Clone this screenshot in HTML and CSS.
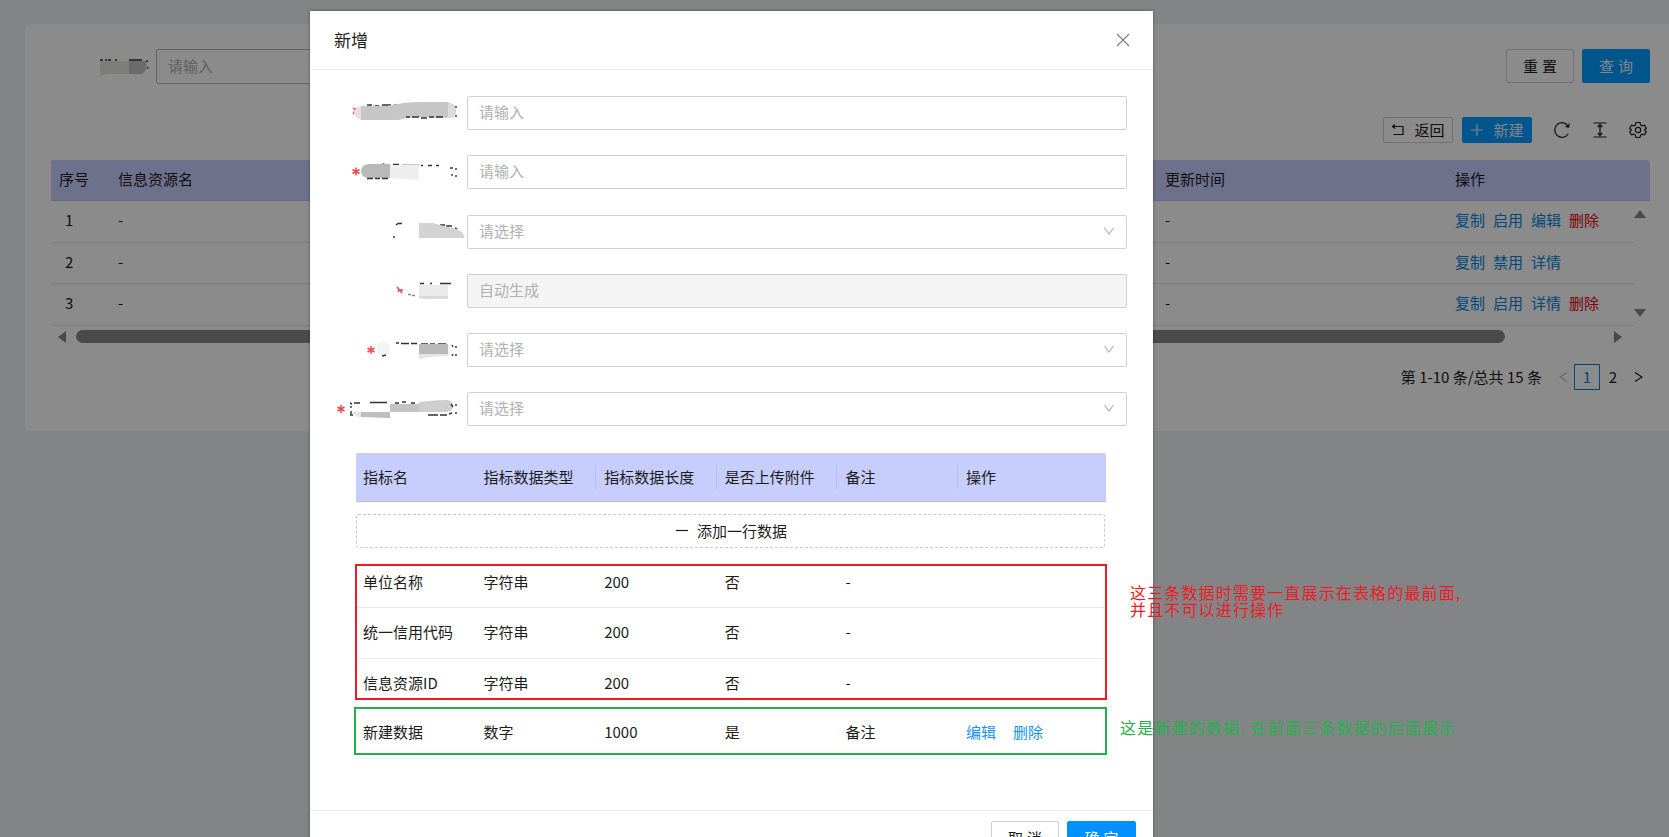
FILE: index.html
```html
<!DOCTYPE html>
<html lang="zh-CN">

<head>
    <meta charset="UTF-8">
    <title>信息资源</title>
    <link rel="stylesheet" href="styles.css">
</head>

<body>
    <div class="page">
        <div class="card">
            <!-- 查询条件 -->
            <div class="search">
                <svg class="searchLabel" width="50" height="34" viewBox="0 0 50 34">
                    <path class="bit" d="M1 11h3m2 0h2m1 0h3m4 0h2m12 0h13" />
                    <path fill="#e4e4e0" d="M1 12h29v13H10q-5 0-9 2z" />
                    <path fill="#c4c4c4" d="M30 12h17q2 9-4 13H30z" />
                    <path class="bit" d="M47 12h2m-1 7h1.500" />
                </svg>
                <div class="input searchInput">请输入</div>
                <div class="searchBtns">
                    <span class="btn">重置</span>
                    <span class="btn primary">查询</span>
                </div>
            </div>
            <!-- 工具栏 -->
            <div class="toolbar">
                <span class="btn small">
                    <svg width="14" height="14" viewBox="0 0 14 14"><path class="line" d="M1.500 3.500h10.500v8h-9.500M4 1.500l-2.500 2 2.500 2" /></svg>返回</span>
                <span class="btn small primary">
                    <svg width="14" height="14" viewBox="0 0 14 14"><path class="line" d="M7 1v12M1 7h12" /></svg>新建</span>
                <svg class="tool" width="18" height="18" viewBox="0 0 18 18"><path class="line" d="M15.300 12.800a7.300 7.300 0 1 1 .2-7.200M16.200 2.500l-.5 3.500-3.300-.6" /></svg>
                <svg class="tool" width="18" height="18" viewBox="0 0 18 18"><path class="line" d="M2.500 2h13M2.500 16h13M9 4v10M6.800 6L9 3.500 11.200 6M6.800 12L9 14.500l2.200-2.500" /></svg>
                <svg class="tool" width="18" height="18" viewBox="0 0 18 18"><path class="line" d="M7 1.500h4l.6 2.400 1.500.9 2.400-.7 1.800 3.200-1.800 1.700 1.800 1.700-1.800 3.200-2.400-.7-1.500.9-.6 2.400H7l-.6-2.400-1.500-.9-2.400.7L.7 10.700 2.500 9 .7 7.300l1.800-3.200 2.400.7 1.500-.9z" /><circle class="line" cx="9" cy="9" r="2.700" /></svg>
            </div>
            <!-- 列表 -->
            <div class="list">
                <div class="listRow listHead">
                    <span>序号</span><span>信息资源名</span><span>更新时间</span><span>操作</span>
                </div>
                <div class="listBody">
                    <div class="listRows">
                        <div class="listRow">
                            <span class="no">1</span><span>-</span><span>-</span>
                            <span class="links"><a>复制</a><a>启用</a><a>编辑</a><a class="del">删除</a></span>
                        </div>
                        <div class="listRow">
                            <span class="no">2</span><span>-</span><span>-</span>
                            <span class="links"><a>复制</a><a>禁用</a><a>详情</a></span>
                        </div>
                        <div class="listRow">
                            <span class="no">3</span><span>-</span><span>-</span>
                            <span class="links"><a>复制</a><a>启用</a><a>详情</a><a class="del">删除</a></span>
                        </div>
                    </div>
                    <div class="scrollY">
                        <svg width="12" height="8" viewBox="0 0 12 8"><path d="M6 0l6 8H0z" /></svg>
                        <svg width="12" height="8" viewBox="0 0 12 8"><path d="M6 8l6-8H0z" /></svg>
                    </div>
                </div>
                <div class="scrollX">
                    <svg width="8" height="12" viewBox="0 0 8 12"><path d="M0 6l8-6v12z" /></svg>
                    <div class="thumb"></div>
                    <svg width="8" height="12" viewBox="0 0 8 12"><path d="M8 6L0 0v12z" /></svg>
                </div>
            </div>
            <!-- 分页 -->
            <div class="pager">
                <span class="total">第 1-10 条/总共 15 条</span>
                <svg class="prev" width="9" height="12" viewBox="0 0 9 12"><path class="line" d="M8 1.500L1 6l7 4.500" /></svg>
                <span class="num active">1</span>
                <span class="num">2</span>
                <svg width="9" height="12" viewBox="0 0 9 12"><path class="line" d="M1 1.500l7 4.500-7 4.500" /></svg>
            </div>
        </div>
    </div>

    <div class="mask"></div>

    <div class="modal">
        <div class="modalHead">
            <span>新增</span>
            <svg width="14" height="14" viewBox="0 0 14 14"><path class="line" d="M1 1l12 12M13 1L1 13" /></svg>
        </div>
        <div class="form">
            <div class="item">
                <div class="label">
                    <svg width="157" height="34" viewBox="0 0 157 34">
                        <path class="star" d="M43 12l3 2-3 4m3-6v3" />
                        <path class="bit" d="M57 9h5m3 1h4m3-1h9m3 0h3m1 1h4" />
                        <path fill="#ecdede" d="M51 10q-5 1-7 6 1 6 7 8z" />
                        <path fill="#c6c6c6" d="M51 10h26q18-4 32-4h26q6 0 10 4 3 8-3 12l-33-1q-11 0-20 3H51z" />
                        <path fill="#dcdcdc" d="M138 6.200q11 4 6 14l-3 2h-3z" />
                        <path class="bit" d="M96 21h4m2 0h7m2 1h6m2-1h5m2 0h7M146 10v2m0 7v2" />
                    </svg>
                </div>
                <div class="input">请输入</div>
            </div>
            <div class="item">
                <div class="label">
                    <svg width="157" height="34" viewBox="0 0 157 34">
                        <path class="star" d="M46 12.500v8M42.500 14.500l7 4m0-4l-7 4" />
                        <path class="bit" d="M73 8.500l3 2m7-1h6m3 1h17m2 0h2m5 0h4m4 0h3" />
                        <path fill="#b9b9b9" d="M59 9h21v14H58q-7-1-7-7t8-7z" />
                        <path fill="#eee" d="M80 10h29v15l-29-2z" />
                        <path class="bit" d="M57 23.500h6m2 0h5m2 0h6M140 13h3m-1 6v2m4-8v2m0 5v2" />
                    </svg>
                </div>
                <div class="input">请输入</div>
            </div>
            <div class="item">
                <div class="label">
                    <svg width="157" height="34" viewBox="0 0 157 34">
                        <path class="bit" d="M86 10l2-1.500h4M84 21v2M130 10h5m1 1h6m3 2l2 1" />
                        <path fill="#d3d3d3" d="M109 8h14q10 3 20 5 10 2 12 10h-46z" />
                    </svg>
                </div>
                <div class="input select">请选择<svg width="12" height="8" viewBox="0 0 12 8"><path class="line" d="M1.500 1L6 7l4.500-6" /></svg></div>
            </div>
            <div class="item">
                <div class="label">
                    <svg width="157" height="34" viewBox="0 0 157 34">
                        <path class="star" d="M87 13l5 6m-4-1l1-2m0 0l4 0" />
                        <path class="bit thin" d="M98 20.500h3m1 1h3" />
                        <path class="bit" d="M110 9.500h4m6 0h2m8 0h11" />
                        <path fill="#ebebeb" d="M109 11h29v11h-29z" />
                        <path fill="#dadada" d="M109 22h29v3h-22q-5 0-7-1z" />
                    </svg>
                </div>
                <div class="input disabled">自动生成</div>
            </div>
            <div class="item">
                <div class="label">
                    <svg width="157" height="34" viewBox="0 0 157 34">
                        <path class="star" d="M61 13v8M57.500 15l7 4m0-4l-7 4" />
                        <circle cx="73" cy="15.500" r="7" fill="#f4f4f4" />
                        <path class="bit" d="M72 23l4-1M86 10h3m2 .500h8m2 0h6m4 .500h7m2 0h5m3 0h8" />
                        <path fill="#b9b9b9" d="M109 11h29v10h-29z" />
                        <path fill="#e4e4e4" d="M109 21h29v2q-16 0-29 3z" />
                        <path class="bit" d="M142 12l1 2m0 7l-1 2M146 13v2m0 6v2" />
                    </svg>
                </div>
                <div class="input select">请选择<svg width="12" height="8" viewBox="0 0 12 8"><path class="line" d="M1.500 1L6 7l4.500-6" /></svg></div>
            </div>
            <div class="item">
                <div class="label">
                    <svg width="157" height="34" viewBox="0 0 157 34">
                        <path class="star" d="M31 13v8M27.500 15l7 4m0-4l-7 4" />
                        <path class="bit" d="M40 11l2 1m2-1h6m10-.500h17m8 .500h4m3-1h4m5 1h4M41 14v2m0 3v3m-1 1h3" />
                        <path fill="#efe3e3" d="M43 20h8v5q-6 0-8-5z" />
                        <path fill="#bebebe" d="M51 20h29v6l-29-1z" />
                        <path fill="#c3c3c3" d="M80 12h29v8H80z" />
                        <path fill="#cecece" d="M109 10q14-2 28-2 6 1 6 6t-6 6h-28z" />
                        <path class="bit" d="M118 23h10m2 0h7m2-1l3-1m-1-9l2 3M146 12v2m0 6v2" />
                    </svg>
                </div>
                <div class="input select">请选择<svg width="12" height="8" viewBox="0 0 12 8"><path class="line" d="M1.500 1L6 7l4.500-6" /></svg></div>
            </div>
        </div>
        <!-- 指标表格 -->
        <div class="table">
            <div class="row head">
                <span>指标名</span><span>指标数据类型</span><span>指标数据长度</span><span>是否上传附件</span><span>备注</span><span>操作</span>
            </div>
            <div class="add">
                <svg width="12" height="12" viewBox="0 0 12 12"><path class="line" d="M0 5.500h12" /></svg>添加一行数据
            </div>
            <div class="row"><span>单位名称</span><span>字符串</span><span>200</span><span>否</span><span>-</span><span></span></div>
            <div class="row"><span>统一信用代码</span><span>字符串</span><span>200</span><span>否</span><span>-</span><span></span></div>
            <div class="row"><span>信息资源ID</span><span>字符串</span><span>200</span><span>否</span><span>-</span><span></span></div>
            <div class="row last"><span>新建数据</span><span>数字</span><span>1000</span><span>是</span><span>备注</span><span class="ops"><a>编辑</a><a>删除</a></span></div>
        </div>
        <div class="modalFoot">
            <span class="btn">取消</span>
            <span class="btn primary">确定</span>
        </div>
    </div>

    <!-- 标注 -->
    <div class="box redBox"></div>
    <div class="box greenBox"></div>
    <p class="note redNote">这三条数据时需要一直展示在表格的最前面,<br>并且不可以进行操作</p>
    <p class="note greenNote">这是新建的数据, 在前面三条数据的后面展示</p>
</body>

</html>
```

FILE: styles.css
```css
* {
    padding: 0;
    margin: 0;
    box-sizing: border-box;
}

body {
    position: relative;
    height: 837px;
    overflow: hidden;
    background: #eff1f5;
    color: #1c1c1c;
    font: 15px/22px "Noto Sans CJK SC", sans-serif;
}

svg {
    display: block;
    flex: none;
}

.line {
    fill: none;
    stroke: currentColor;
    stroke-width: 1.2;
}

.bit {
    fill: none;
    stroke: #333;
    stroke-width: 1.4;
}

.thin {
    stroke: #888;
}

.star {
    fill: none;
    stroke: #f0494c;
    stroke-width: 1.5;
}

.page {
    padding: 24px 0 0 25px;
}

.card {
    height: 407px;
    padding: 25px 19px 0 26px;
    background: #fdfdfd;
    border-radius: 6px 0 0 6px;
}

.input {
    height: 34px;
    padding: 0 11px;
    border: 1px solid #d0d0d0;
    border-radius: 2px;
    color: #b0b0b0;
    line-height: 30px;
}

.btn {
    display: flex;
    align-items: center;
    justify-content: center;
    width: 68px;
    height: 34px;
    border: 1px solid #cfcfcf;
    border-radius: 2px;
    letter-spacing: 4px;
    text-indent: 4px;
    font-size: 15px;
}

.btn.primary {
    border-color: #0090ff;
    background: #0090ff;
    color: #fff;
}

.card .btn.primary {
    border-color: #009dff;
    background: #009dff;
    color: #e8f2fb;
}

/* 查询条件 */
.search {
    display: flex;
}

.searchLabel {
    margin-left: 48px;
}

.searchInput {
    width: 300px;
    margin-left: 7px;
    height: 35px;
    line-height: 31px;
    border-color: #b8b8b8;
}

.searchBtns {
    display: flex;
    gap: 8px;
    margin-left: auto;
}

/* 工具栏 */
.toolbar {
    display: flex;
    align-items: center;
    justify-content: flex-end;
    height: 26px;
    margin-top: 33px;
    padding-right: 3px;
}

.btn.small {
    gap: 9px;
    width: 70px;
    height: 26px;
    margin-right: 9px;
    letter-spacing: 0;
    text-indent: 0;
}

.tool {
    margin-left: 20px;
}

.btn.small + .tool {
    margin-left: 12px;
}

/* 列表 */
.list {
    margin-top: 17px;
}

.listRow {
    display: grid;
    grid-template-columns: 59px 1047px 290px 1fr;
    align-items: center;
    height: 41.5px;
    padding: 0 0 2px 8px;
    border-bottom: 1px solid #e2e2e2;
}

.listHead {
    height: 41px;
    background: #c9cefd;
    border-color: #bcc0e4;
    border-radius: 2px 4px 0 0;
}

.no {
    padding-left: 6px;
}

.listBody {
    display: flex;
}

.listRows {
    flex: 1;
}

.links {
    display: flex;
    gap: 8px;
    color: #0084de;
}

.del {
    color: #e60012;
}

.scrollY {
    display: flex;
    flex-direction: column;
    justify-content: space-between;
    width: 16px;
    padding: 9px 0 9px;
}

.scrollY svg,
.scrollX svg {
    fill: #858585;
}

.scrollX {
    display: flex;
    align-items: center;
    height: 22px;
    padding: 0 28px 0 7px;
}

.thumb {
    width: 1429px;
    height: 13px;
    margin: 0 auto 0 10px;
    border-radius: 7px;
    background: #888;
}

/* 分页 */
.pager {
    display: flex;
    align-items: center;
    justify-content: flex-end;
    margin-top: 16px;
    padding-right: 7px;
}

.prev {
    margin: 0 6px 0 17px;
    color: #b5b5b5;
}

.num {
    width: 26px;
    height: 26px;
    border: 1px solid transparent;
    text-align: center;
    line-height: 23px;
}

.num.active {
    border-color: #0084de;
    color: #0084de;
}

.num + svg {
    margin-left: 8px;
}

.mask {
    position: absolute;
    inset: 0;
    background: rgba(0, 0, 0, 0.45);
}

/* 弹窗 */
.modal {
    position: absolute;
    top: 11px;
    left: 310px;
    width: 843px;
    height: 860px;
    background: #fff;
    box-shadow: 0 0 3px rgba(0, 0, 0, 0.4);
}

.modalHead {
    display: flex;
    align-items: center;
    justify-content: space-between;
    height: 59px;
    padding: 0 23px 1px 24px;
    border-bottom: 1px solid #ebebeb;
    font-size: 17px;
}

.modalHead svg {
    color: #808080;
}

.form {
    display: grid;
    grid-template-rows: 59px 60px 59px 59px 59px 34px;
    padding-top: 26px;
}

.item {
    display: flex;
}

.item .input {
    width: 660px;
}

.input.select {
    display: flex;
    align-items: center;
    justify-content: space-between;
    padding-bottom: 2px;
}

.input.disabled {
    background: #f4f4f4;
}

.table {
    width: 750px;
    margin: 27px 0 0 46px;
}

.row {
    display: grid;
    grid-template-columns: 120.6px 120.6px 120.6px 120.6px 120.6px 1fr;
    align-items: center;
    height: 50.3px;
    padding-bottom: 1px;
    border-bottom: 1px solid #ebebeb;
}

.row.last {
    padding-bottom: 4px;
}

.row span {
    padding-left: 7px;
}

.head {
    height: 49px;
    margin-bottom: 12px;
    padding-bottom: 1px;
    background: #c7cdfd;
    border-color: #bbbfd8;
    border-radius: 2px 2px 0 0;
}

.head span {
    margin-left: -2px;
    border-left: 1px solid transparent;
    padding-left: 8px;
    line-height: 24px;
}

.head span:nth-child(n+3) {
    border-color: #b9bee8;
}

.add {
    display: flex;
    align-items: center;
    justify-content: center;
    gap: 9px;
    height: 34px;
    margin: 0 1px 10px 0;
    padding-left: 2px;
    border: 1px dashed #cbcbcb;
    border-radius: 2px;
}

.ops {
    display: flex;
    gap: 17px;
    color: #1490f5;
}

.modalFoot {
    display: flex;
    justify-content: flex-end;
    gap: 8px;
    margin-top: 51px;
    padding: 10px 17px 0;
    border-top: 1px solid #ebebeb;
}

.modalFoot .btn {
    height: 33px;
}

.modalFoot .primary {
    width: 69px;
}

/* 标注 */
.box {
    position: absolute;
    border: 2px solid #ed1c24;
}

.redBox {
    top: 564px;
    left: 355px;
    width: 752px;
    height: 136px;
}

.greenBox {
    top: 707px;
    left: 354px;
    width: 753px;
    height: 48px;
    border-color: #22b14c;
}

.note {
    position: absolute;
    font-size: 16px;
    line-height: 17px;
    letter-spacing: 1.15px;
    white-space: nowrap;
}

.redNote {
    top: 584px;
    left: 1130px;
    color: #ed1c24;
}

.greenNote {
    top: 719px;
    left: 1120px;
    color: #22b14c;
}
```
